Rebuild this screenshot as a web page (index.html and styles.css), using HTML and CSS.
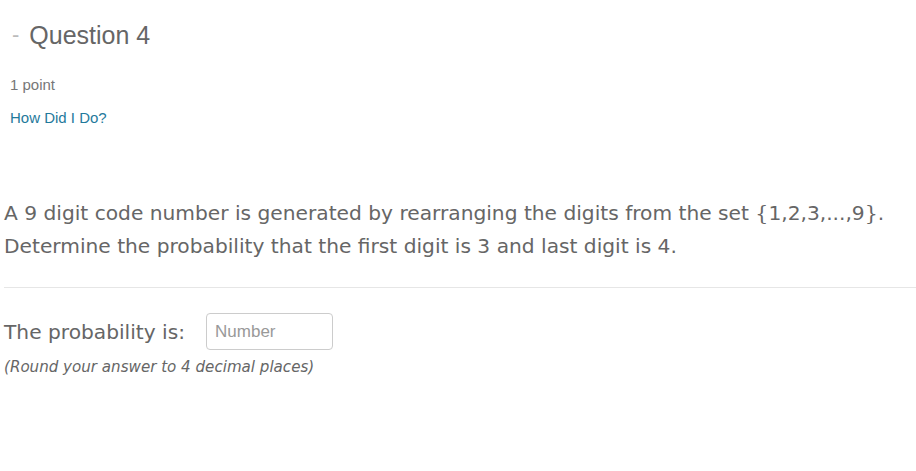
FILE: index.html
```html
<!DOCTYPE html>
<html lang="en">
<head>
  <link rel="stylesheet" href="styles.css">
  <title>Question 4</title>
</head>
<body>
  <div class="question-head">
    <span class="toggle">-</span>
    <h2 class="question-title">Question 4</h2>
  </div>
  <div class="meta">
    <p class="points">1 point</p>
    <a class="how-did" href="#">How Did I Do?</a>
  </div>

  <div class="question-body">
    <p class="prompt">A 9 digit code number is generated by rearranging the digits from the set <span class="math"><span class="brace">{</span>1,2,3,...,9<span class="brace">}</span></span>.<br>
    Determine the probability that the first digit is 3 and last digit is 4.</p>
  </div>

  <hr class="divider">

  <div class="answer">
    <div class="answer-row">
      <label class="answer-label" for="answer">The probability is:</label>
      <input id="answer" class="num-input" type="text" placeholder="Number">
    </div>
    <p class="hint">(Round your answer to 4 decimal places)</p>
  </div>
</body>
</html>
```

FILE: styles.css
```css
body {
  margin: 0;
  background-color: white;
  color: #666;
  font-family: "DejaVu Sans", Verdana, sans-serif;
}

.question-head {
  display: flex;
  align-items: center;
  padding: 20px 0 0 12px;
  height: 30px;
}
.toggle {
  color: #bbb;
  font-family: "Liberation Sans", Arial, sans-serif;
  font-size: 22px;
  margin-right: 10px;
}
.question-title {
  margin: 0;
  font-family: "Liberation Sans", Arial, sans-serif;
  font-weight: normal;
  font-size: 25px;
  color: #666;
}

.meta {
  padding: 26px 0 0 10px;
  font-family: "Liberation Sans", Arial, sans-serif;
  font-size: 15px;
}
.points {
  margin: 0 0 16px 0;
  color: #777;
}
.how-did {
  color: #1f7a9c;
  text-decoration: none;
}

.question-body {
  padding: 71px 0 0 4px;
}
.prompt {
  margin: 0;
  font-size: 20.2px;
  line-height: 33px;
}
.math {
  white-space: nowrap;
}
.brace {
  font-family: "DejaVu Serif", "Liberation Serif", serif;
  font-size: 20.5px;
}

.divider {
  border: none;
  border-top: 1px solid #e6e6e6;
  margin: 24px 0 0 4px;
}

.answer {
  padding: 25px 0 0 4px;
}
.answer-row {
  display: flex;
  align-items: center;
  gap: 21px;
}
.answer-label {
  font-size: 20.2px;
}
.num-input {
  width: 127px;
  height: 37px;
  box-sizing: border-box;
  padding: 6px 8px;
  border: 1px solid #ccc;
  border-radius: 4px;
  font-family: "Liberation Sans", Arial, sans-serif;
  font-size: 17px;
  color: #555;
}
.num-input::placeholder {
  color: #999;
}
.hint {
  margin: 8px 0 0 0;
  font-style: italic;
  font-size: 15.1px;
}
```
